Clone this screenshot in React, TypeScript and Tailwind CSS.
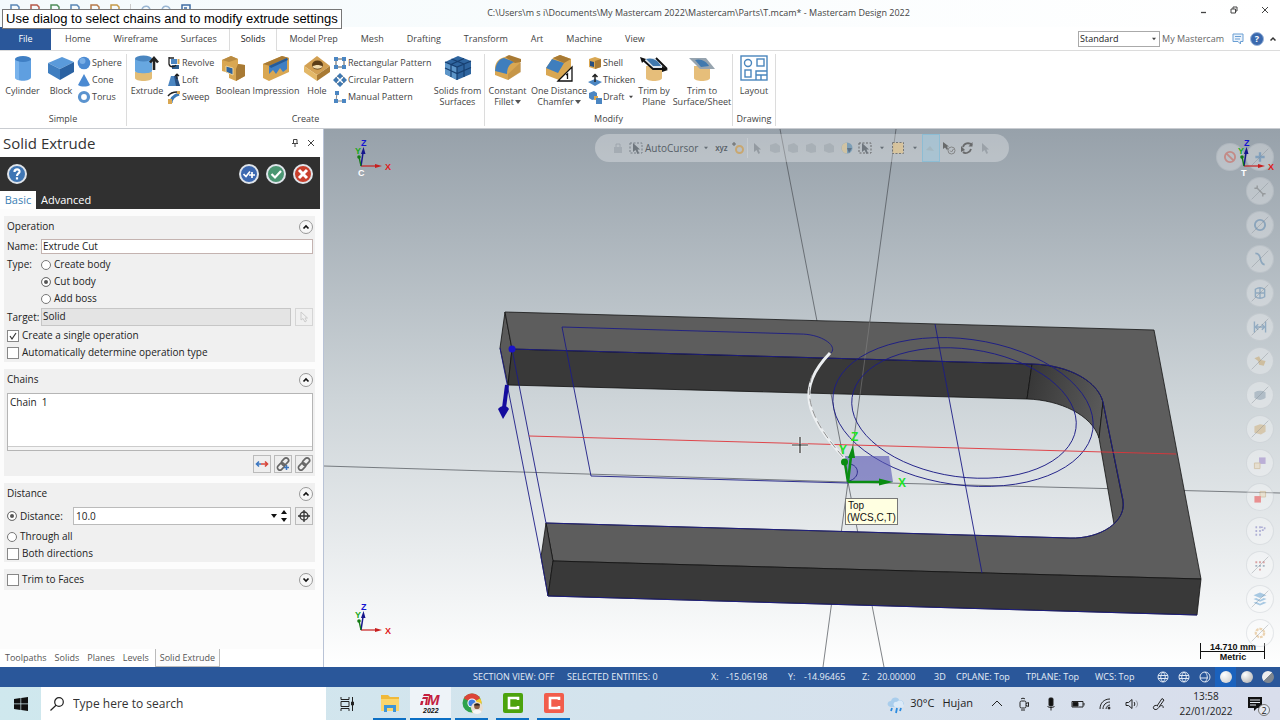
import { useState, type ReactNode } from 'react';

const RIBBON_TABS = ['Home', 'Wireframe', 'Surfaces', 'Solids', 'Model Prep', 'Mesh', 'Drafting', 'Transform', 'Art', 'Machine', 'View'];
const PANEL_TABS = ['Toolpaths', 'Solids', 'Planes', 'Levels', 'Solid Extrude'];

const BLUE = '#4b86c2';
const DARK_BLUE = '#2f659f';
const GOLD = '#d9a752';
const DARK_GOLD = '#a87a34';

/* ---------- Icon helpers ---------- */

function Icon({ size = 'w-7 h-7', box = 28, children }: { size?: string; box?: number; children: ReactNode }) {
  return (
    <svg className={`${size} shrink-0`} viewBox={`0 0 ${box} ${box}`} fill="none" aria-hidden="true">
      {children}
    </svg>
  );
}

// Isometric block with three shaded faces
function Cube({ top, left, right }: { top: string; left: string; right: string }) {
  return (
    <>
      <path d="M1 9 L15 3 L27 8 L13 15Z" fill={top} />
      <path d="M1 9 L13 15 V26 L1 19Z" fill={left} />
      <path d="M13 15 L27 8 V18 L13 26Z" fill={right} />
    </>
  );
}

const bigIcons: Record<string, ReactNode> = {
  cylinder: (
    <>
      <path d="M6 5 V23 C6 28 22 28 22 23 V5Z" fill="#5f9fe0" />
      <path d="M6 5 V23 C6 25 8 26 10 26 V6Z" fill="#79b3ec" />
      <ellipse cx="14" cy="5" rx="8" ry="3" fill="#3f7fc4" />
    </>
  ),
  block: <Cube top="#5a9ada" left="#3f7ec0" right="#2b62a2" />,
  extrude: (
    <>
      <path d="M2 18 V24 C2 28 19 28 19 24 V18Z" fill="#e2bd77" />
      <path d="M2 5 V17 C2 20 19 20 19 17 V5Z" fill="#67a7e0" />
      <ellipse cx="10.500" cy="4.500" rx="8.500" ry="3" fill="#4a86c0" />
      <path d="M21 16 V6 M17 8.500 L21 4 L25 8.500" stroke="#222" strokeWidth="2.600" />
    </>
  ),
  boolean: (
    <>
      <path d="M3 6 L12 2 L19 5 V10 L26 11 V22 L17 27 L10 24 V19 L3 17Z" fill={GOLD} />
      <path d="M19 10 L26 11 V22 L17 27 V15Z" fill={DARK_GOLD} />
      <path d="M3 6 L12 2 L19 5 L10 8Z" fill="#b98b42" />
      <path d="M7 12 L14 14 V21 L7 18Z" fill={DARK_BLUE} stroke="#f0d49a" />
    </>
  ),
  impression: (
    <>
      <path d="M1 10 L20 2 L27 4 V18 L7 27 L1 24Z" fill={GOLD} />
      <path d="M1 10 L20 2 L27 4 L8 12Z" fill={DARK_GOLD} />
      <path d="M7 12 L25 4 V15 L21 18 L18 14 L14 20 L11 16 L7 20Z" fill="#3f7fc4" />
      <path d="M7 12 L25 4 L26 6 L9 14Z" fill="#265b98" />
    </>
  ),
  hole: (
    <>
      <path d="M1 12 L14 2 L27 12 L14 21Z" fill="#d2a053" />
      <path d="M1 12 V18 L14 27 V21Z" fill="#e3b868" />
      <path d="M27 12 V18 L14 27 V21Z" fill={DARK_GOLD} />
      <ellipse cx="14.500" cy="11" rx="5.500" ry="4.500" fill="#5b3d17" />
      <path d="M9.500 12.500 C11 15.500 18 15.500 19.500 12.500 C17 10.500 12 10.500 9.500 12.500Z" fill="#f1dcae" />
    </>
  ),
  surfaces: (
    <>
      <path d="M1 8 L14 2 L27 7 V20 L13 26 L1 20Z" fill="#2f659f" />
      <path d="M1 8 L13 13 L13 26 L1 20Z" fill="#5d96c9" />
      <path d="M1 8 L13 13 L27 7 M13 13 V26 M1 14 L13 19.500 L27 13.500 M7 10.500 V23 M20 10 V23 M7.500 5 L20 10 M20 4.500 L7 10.500" stroke="#173f70" strokeWidth="1.200" />
    </>
  ),
  fillet: (
    <>
      <path d="M1 13 C2 7 6 4 11 3 L26 6 V18 L14 26 L1 21Z" fill={GOLD} />
      <path d="M1 17 C2 9 5 5 10 4 L21 8 C16 9 13 13 13 20Z" fill="#3f7ebd" />
      <path d="M11 3 L15 1 L27 5 V8 L21 9Z" fill={DARK_GOLD} />
      <path d="M14 20 V26 L27 18 V8Z" fill="#b98a42" opacity=".6" />
    </>
  ),
  chamfer: (
    <>
      <path d="M1 14 L8 4 L15 1 L26 5 V18 L14 26 L1 21Z" fill={GOLD} />
      <path d="M1 14 L7 5 L19 9 L13 19Z" fill="#3f7ebd" />
      <path d="M8 4 L15 1 L26 5 L19 9Z" fill={DARK_GOLD} />
      <path d="M13 27 L27 13 V27Z" fill="#fff" stroke="#111" strokeWidth="1.300" />
      <path d="M21 21 L22.500 20 V25" stroke="#111" strokeWidth="1.300" />
    </>
  ),
  trimPlane: (
    <>
      <path d="M6 12 V24 C6 28 22 28 22 24 V12Z" fill="#e6be7a" />
      <path d="M1 5 L16 4 L27 15 L13 15Z" fill="#dfe7ef" />
      <path d="M6 5 C12 3 18 6 21 12 L13 12Z" fill="#4179ae" />
      <path d="M2 5 L13 15 L26 15 M16 4 L27 15" stroke="#111" strokeWidth="1.800" />
      <path d="M0 3 L6 5 L2 9Z M28 16 L22 18 V12Z" fill="#111" />
    </>
  ),
  trimSheet: (
    <>
      <path d="M6 12 V24 C6 28 22 28 22 24 V12Z" fill="#e6be7a" />
      <path d="M1 4 L18 4 L27 15 L12 15Z" fill="#97a4af" />
      <path d="M7 6 C13 4 19 8 21 12 L13 13Z" fill="#4179ae" />
    </>
  ),
  layout: (
    <g stroke="#4a86bd" strokeWidth="1.400">
      <rect x="1" y="2" width="26" height="24" />
      <circle cx="8" cy="9" r="3.500" />
      <rect x="17" y="5" width="7" height="7" />
      <rect x="5" y="16" width="6" height="7" />
      <path d="M27 17 H16 V26 M16 21 H27 M21 21 V26" />
    </g>
  ),
};

const smallIcons: Record<string, ReactNode> = {
  sphere: (
    <>
      <circle cx="7" cy="7" r="6.300" fill="#4b8ad2" />
      <circle cx="5.500" cy="5" r="3" fill="#79aee6" />
    </>
  ),
  cone: <path d="M7 1 L13 12 C10 14 4 14 1 12Z" fill="#4b8ad2" />,
  torus: <circle cx="7" cy="7" r="4.500" stroke="#5a93cf" strokeWidth="3.200" />,
  revolve: (
    <>
      <path d="M4 3 H10 V8 H4Z" fill={BLUE} />
      <path d="M5 9 H12 V13 H5Z" fill="#2f5f8e" />
      <path d="M2 1 V8 C3 12 8 11 9 9 M2 2 H7" stroke="#222" strokeWidth="1.300" />
      <path d="M11.500 3 V8" stroke={GOLD} strokeWidth="2" />
    </>
  ),
  loft: (
    <>
      <path d="M1 13 L4 3 H9 L13 13Z" fill={BLUE} />
      <path d="M7 3 L9 13 H13 L10 3Z" fill="#284f80" />
      <path d="M10 1 V6 M8 3 L10 1 L12 3" stroke="#222" strokeWidth="1.200" />
    </>
  ),
  sweep: (
    <>
      <path d="M4 13 C4 9 6 6 12 4" stroke="#3b78b5" strokeWidth="3" />
      <path d="M1 6 C4 2 7 2 10 2" stroke="#222" strokeWidth="1.500" />
      <path d="M1 9 H5 V14 H1Z M10 1 H13 V4 H10Z" fill={GOLD} />
    </>
  ),
  rectPattern: (
    <>
      <path d="M3 3 H11 V11 H3Z" stroke="#555" strokeWidth="1" />
      <path d="M1 1 H5 V5 H1Z M9 1 H13 V5 H9Z M1 9 H5 V13 H1Z M9 9 H13 V13 H9Z" fill={BLUE} />
    </>
  ),
  circPattern: (
    <>
      <circle cx="7" cy="7" r="4.500" stroke="#777" />
      <path d="M7 0 L10 3 L7 6 L4 3Z M7 8 L10 11 L7 14 L4 11Z M0 7 L3 4 L6 7 L3 10Z M8 7 L11 4 L14 7 L11 10Z" fill="#3f78b0" />
    </>
  ),
  manPattern: (
    <>
      <path d="M4 3 L3 11 H11" stroke="#888" />
      <path d="M2 1 H6 V5 H2Z M1 9 H5 V13 H1Z M9 9 H13 V13 H9Z" fill={BLUE} />
    </>
  ),
  shell: (
    <>
      <path d="M1 3 L7 1 L13 3 V11 L7 13 L1 11Z" fill={GOLD} />
      <path d="M7 5 L13 3 V11 L7 13Z" fill={DARK_GOLD} />
      <path d="M2 5 L6 6 V11 L2 10Z" fill="#284f80" />
    </>
  ),
  thicken: (
    <>
      <path d="M0 9 L7 6 L14 9 L7 13Z" fill={BLUE} />
      <path d="M7 9 V2 M4.500 4 L7 1.500 L9.500 4" stroke="#222" strokeWidth="1.500" />
    </>
  ),
  draft: (
    <>
      <path d="M1 3 L6 1 L9 3 V9 L4 10 L1 8Z" fill={BLUE} />
      <path d="M6 6 H10 V10 H6Z" fill={GOLD} />
      <path d="M8 8 H14 V14 H8Z" fill={BLUE} />
    </>
  ),
};

/* ---------- Ribbon ---------- */

function BigButton({ icon, width, lines, caret }: { icon: string; width: string; lines: string[]; caret?: boolean }) {
  return (
    <button type="button" className={`flex flex-col items-center ${width}`}>
      <Icon>{bigIcons[icon]}</Icon>
      <span className="mt-[3px] leading-[11px] whitespace-nowrap">
        {lines.map((line, i) => (
          <span key={line} className="flex items-center justify-center">
            {line}
            {caret && i === lines.length - 1 && (
              <svg className="w-1.5 h-1.5 ml-px" viewBox="0 0 6 6">
                <path d="M0 1 H6 L3 5Z" fill="#555" />
              </svg>
            )}
          </span>
        ))}
      </span>
    </button>
  );
}

function SmallButtons({ items, width, caretOn }: { items: [string, string][]; width: string; caretOn?: string }) {
  return (
    <div className={`flex flex-col ${width}`}>
      {items.map(([icon, label]) => (
        <button key={label} type="button" className="flex items-center gap-px h-[17px] whitespace-nowrap">
          <Icon size="w-3.5 h-3.5" box={14}>{smallIcons[icon]}</Icon>
          {label}
          {caretOn === label && (
            <svg className="w-1 h-1 ml-1" viewBox="0 0 6 6">
              <path d="M0 1 H6 L3 5Z" fill="#444" />
            </svg>
          )}
        </button>
      ))}
    </div>
  );
}

function RibbonGroup({ label, children }: { label: string; children: ReactNode }) {
  return (
    <section className="flex flex-col border-r border-[#dcdcdc] mb-0.5">
      <div className="flex items-start flex-1">{children}</div>
      <h2 className="text-center leading-[14px]">{label}</h2>
    </section>
  );
}

const quickAccess = ['#5a86b4', '#b55a4a', '#4f8d5a', '#5a86b4', '#b57a4a', '#c49a4a'];

function Header() {
  const [tab, setTab] = useState('Solids');
  return (
    <header className="bg-white text-[#444]">
      <div className="flex h-[27px] bg-gradient-to-r from-[#f4fafc] to-white">
        <div className="flex items-start gap-2.5 w-[210px] pl-2.5 pt-1" aria-hidden="true">
          {quickAccess.map((c, i) => (
            <svg key={i} className="w-2.5 h-3" viewBox="0 0 10 12" fill="none">
              <path d="M1 11 V1 H7 L9 3 V11Z" stroke={c} strokeWidth="1.500" />
            </svg>
          ))}
          <span className="w-px h-4 bg-[#ccc]" />
          <svg className="w-2.5 h-3" viewBox="0 0 10 12" fill="none">
            <path d="M1 5 C3 1 9 1 9 7" stroke="#9bb7d3" strokeWidth="1.500" />
          </svg>
          <svg className="w-2.5 h-3" viewBox="0 0 10 12" fill="none">
            <path d="M9 5 C7 1 1 1 1 7" stroke="#9bb7d3" strokeWidth="1.500" />
          </svg>
          <svg className="w-2.5 h-3" viewBox="0 0 10 12" fill="none">
            <path d="M1 1 H9 V11 H1Z" stroke="#3f6da4" strokeWidth="1.500" />
            <path d="M3 4 H6" stroke="#3f6da4" strokeWidth="1.500" />
          </svg>
        </div>
        <h1 className="flex-1 text-center text-[9px] leading-[26px]">
          C:\Users\m s i\Documents\My Mastercam 2022\Mastercam\Parts\T.mcam* - Mastercam Design 2022
        </h1>
        <div className="flex items-start">
          <button type="button" aria-label="Minimize" className="w-8 h-5 grid place-items-center">
            <svg className="w-2 h-2" viewBox="0 0 8 8"><path d="M2 6.500 H7" stroke="#444" strokeWidth="1.300" /></svg>
          </button>
          <button type="button" aria-label="Restore" className="w-[30px] h-5 grid place-items-center">
            <svg className="w-2 h-2" viewBox="0 0 8 8" fill="none"><path d="M1 3 H5.500 V7 H1Z M3 3 V1 H7 V5 H5.500" stroke="#444" /></svg>
          </button>
          <button type="button" aria-label="Close" className="w-[31px] h-5 grid place-items-center">
            <svg className="w-2 h-2" viewBox="0 0 8 8"><path d="M1 1 L7 7 M7 1 L1 7" stroke="#444" /></svg>
          </button>
        </div>
      </div>

      <nav className="flex gap-px h-6 text-[9px] border-b border-[#dcdcdc]">
        <button type="button" className="w-[51px] mr-0.5 bg-[#2a579a] text-white">File</button>
        {RIBBON_TABS.map(name => (
          <button
            key={name}
            type="button"
            onClick={() => setTab(name)}
            className={`px-[11px] whitespace-nowrap ${tab === name ? 'bg-white text-[#222] border-x border-[#dcdcdc] h-6' : ''}`}
          >
            {name}
          </button>
        ))}
        <div className="ml-auto flex items-center pr-1">
          <div className="relative mr-0.5">
            <select aria-label="Toolbar state" className="appearance-none block w-[82px] h-4 border border-[#aaa] bg-white text-[#222] px-px text-[9px] leading-[14px]">
              <option>Standard</option>
            </select>
            <svg className="absolute right-1 top-1.5 w-1 h-1 pointer-events-none" viewBox="0 0 6 6"><path d="M0 1 H6 L3 5Z" fill="#444" /></svg>
          </div>
          <a href="#mastercam" className="text-[#666]">My Mastercam</a>
          <button type="button" aria-label="Messages" className="ml-2">
            <Icon size="w-3 h-3" box={12}>
              <path d="M1 1 H11 V8.500 H8.500 V11 L6 8.500 H1Z" fill="#eaf2fb" stroke="#6a9fd4" />
              <path d="M3 3.500 H9 M3 6 H8" stroke="#6a9fd4" />
            </Icon>
          </button>
          <button type="button" aria-label="Help" className="ml-1.5">
            <span className="grid place-items-center w-3.5 h-3.5 rounded-full bg-[#3a69ae] border border-[#9db6da] text-white text-[9px] font-bold leading-none">?</span>
          </button>
          <button type="button" aria-label="Collapse ribbon" className="ml-1.5">
            <svg className="w-1.5 h-1.5" viewBox="0 0 6 6" fill="none"><path d="M0.500 4.500 L3 2 L5.500 4.500" stroke="#333" strokeWidth="1.500" /></svg>
          </button>
        </div>
      </nav>

      <div className="flex h-[78px] pt-[3px] text-[9px] border-b border-[#c9ccd1]">
        <RibbonGroup label="Simple">
          <BigButton icon="cylinder" width="w-[45px]" lines={['Cylinder']} />
          <BigButton icon="block" width="w-8" lines={['Block']} />
          <SmallButtons width="w-[49px]" items={[['sphere', 'Sphere'], ['cone', 'Cone'], ['torus', 'Torus']]} />
        </RibbonGroup>
        <RibbonGroup label="Create">
          <BigButton icon="extrude" width="w-10" lines={['Extrude']} />
          <SmallButtons width="w-[48px]" items={[['revolve', 'Revolve'], ['loft', 'Loft'], ['sweep', 'Sweep']]} />
          <BigButton icon="boolean" width="w-9" lines={['Boolean']} />
          <BigButton icon="impression" width="w-[50px]" lines={['Impression']} />
          <BigButton icon="hole" width="w-8" lines={['Hole']} />
          <SmallButtons width="w-[98px]" items={[['rectPattern', 'Rectangular Pattern'], ['circPattern', 'Circular Pattern'], ['manPattern', 'Manual Pattern']]} />
          <BigButton icon="surfaces" width="w-[53px]" lines={['Solids from', 'Surfaces']} />
        </RibbonGroup>
        <RibbonGroup label="Modify">
          <BigButton icon="fillet" width="w-[45px]" lines={['Constant', 'Fillet']} caret />
          <BigButton icon="chamfer" width="w-[58px]" lines={['One Distance', 'Chamfer']} caret />
          <SmallButtons width="w-[48px]" caretOn="Draft" items={[['shell', 'Shell'], ['thicken', 'Thicken'], ['draft', 'Draft']]} />
          <BigButton icon="trimPlane" width="w-9" lines={['Trim by', 'Plane']} />
          <BigButton icon="trimSheet" width="w-[60px]" lines={['Trim to', 'Surface/Sheet']} />
        </RibbonGroup>
        <RibbonGroup label="Drawing">
          <BigButton icon="layout" width="w-[42px]" lines={['Layout']} />
        </RibbonGroup>
      </div>
    </header>
  );
}

/* ---------- Solid Extrude panel ---------- */

function GroupHeader({ title, open = true }: { title: ReactNode; open?: boolean }) {
  return (
    <div className="flex items-center justify-between h-[21px]">
      {title}
      <button type="button" aria-label="Toggle section" className="grid place-items-center w-3.5 h-3.5 rounded-full border border-[#999] bg-[#f7f7f7]">
        <svg className={`w-2 h-2 ${open ? '' : 'rotate-180'}`} viewBox="0 0 8 8" fill="none">
          <path d="M1.500 5.500 L4 3 L6.500 5.500" stroke="#111" strokeWidth="1.700" />
        </svg>
      </button>
    </div>
  );
}

function Radio({ name, label, checked }: { name: string; label: string; checked?: boolean }) {
  return (
    <label className="flex items-center gap-[3px] h-[17px]">
      <input
        type="radio"
        name={name}
        defaultChecked={checked}
        className="appearance-none w-2.5 h-2.5 rounded-full border border-[#777] bg-white checked:bg-[#555] checked:shadow-[inset_0_0_0_2px_#fff]"
      />
      {label}
    </label>
  );
}

function Check({ label, checked }: { label: string; checked?: boolean }) {
  return (
    <label className="flex items-center gap-[3px] h-[17px]">
      <span className="grid">
        <input type="checkbox" defaultChecked={checked} className="peer appearance-none w-3 h-3 border border-[#888] bg-white [grid-area:1/1]" />
        <svg className="w-3 h-3 hidden peer-checked:block pointer-events-none [grid-area:1/1]" viewBox="0 0 12 12" fill="none">
          <path d="M3 6 L5 9 L9 3" stroke="#333" strokeWidth="1.200" />
        </svg>
      </span>
      {label}
    </label>
  );
}

function RoundButton({ label, color, children }: { label: string; color: string; children: ReactNode }) {
  return (
    <button type="button" aria-label={label} className={`grid place-items-center w-5 h-5 rounded-full border-2 border-[#dfe4ea] ${color}`}>
      <svg className="w-3 h-3" viewBox="0 0 12 12" fill="none" stroke="#fff" strokeWidth="2.200">{children}</svg>
    </button>
  );
}

function SquareButton({ label, children }: { label: string; children: ReactNode }) {
  return (
    <button type="button" aria-label={label} className="grid place-items-center w-[18px] h-[18px] shrink-0 border border-[#bbb] bg-[#eee]">
      <svg className="w-3.5 h-3.5" viewBox="0 0 14 14" fill="none">{children}</svg>
    </button>
  );
}

const chainLink = (
  <g stroke="#666" strokeWidth="1.700">
    <rect x="6.500" y="0.500" width="5" height="8" rx="2.500" transform="rotate(45 9 4.500)" />
    <rect x="2.500" y="5.500" width="5" height="8" rx="2.500" transform="rotate(45 5 9.500)" />
  </g>
);

function ExtrudePanel() {
  return (
    <aside className="flex flex-col w-[324px] shrink-0 bg-[#fcfcfc] border-r border-[#b9c3d6] text-[10px] text-[#222]">
      <div className="flex items-center h-7 pl-[3px] pr-2 bg-white">
        <h2 className="text-[15px] leading-none text-[#333]">Solid Extrude</h2>
        <button type="button" aria-label="Pin" className="ml-auto mr-2">
          <svg className="w-2 h-2" viewBox="0 0 8 8" fill="none"><path d="M2.500 0.500 H6 V4.500 M2.500 0.500 V4.500 M1 4.500 H7 M4 4.500 V8" stroke="#444" /></svg>
        </button>
        <button type="button" aria-label="Close panel">
          <svg className="w-2 h-2" viewBox="0 0 8 8"><path d="M1 1 L7 7 M7 1 L1 7" stroke="#444" /></svg>
        </button>
      </div>

      <div className="mr-[3px] bg-[#303030]">
        <div className="flex items-center gap-[7px] h-[34px] px-[7px]">
          <RoundButton label="Help" color="bg-[#3f76b4]">
            <path d="M3.500 4 C3.500 0.500 9 0.500 8.500 4 C8 5.500 6 5.500 6 8 M6 9.300 V11.500" />
          </RoundButton>
          <span className="flex-1" />
          <RoundButton label="OK and create new" color="bg-[#3c68b0]">
            <path d="M0.500 6 L3 8.500 L7 3.500 M9 4 V10 M6 7 H12" strokeWidth="1.700" />
          </RoundButton>
          <RoundButton label="OK" color="bg-[#4b9672]"><path d="M1.500 6 L5 9.500 L11 3" /></RoundButton>
          <RoundButton label="Cancel" color="bg-[#c93f2c]"><path d="M2 2 L10 10 M10 2 L2 10" strokeWidth="3" /></RoundButton>
        </div>
        <div className="flex text-[11px] leading-[18px]">
          <button type="button" className="w-9 bg-white text-[#3a80b5]">Basic</button>
          <button type="button" className="px-[5px] text-white">Advanced</button>
        </div>
      </div>

      <div className="flex flex-col gap-[7px] pt-[7px] pl-1 pr-2 flex-1">
        <fieldset className="bg-[#f0f0f0] pl-[3px] pr-0.5 pb-px">
          <GroupHeader title="Operation" />
          <div className="flex items-center h-[19px]">
            <label htmlFor="op-name" className="w-[34px]">Name:</label>
            <input id="op-name" defaultValue="Extrude Cut" className="flex-1 min-w-0 h-[15px] px-px bg-white border border-[#c4b3b0]" />
          </div>
          <div className="flex">
            <span className="w-[34px] leading-[17px]">Type:</span>
            <div>
              <Radio name="type" label="Create body" />
              <Radio name="type" label="Cut body" checked />
              <Radio name="type" label="Add boss" />
            </div>
          </div>
          <div className="flex items-center h-5">
            <label htmlFor="target" className="w-[34px]">Target:</label>
            <input id="target" disabled defaultValue="Solid" className="flex-1 min-w-0 h-[18px] px-px pb-0.5 mr-1 bg-[#e4e4e4] border border-[#c6c6c6]" />
            <button type="button" aria-label="Select target" className="grid place-items-center w-[18px] h-[18px] border border-[#d5d5d5]">
              <svg className="w-3 h-3" viewBox="0 0 12 12" fill="none"><path d="M3 1 V9 L5 7.500 L7 11 L8.500 10 L7 7 H9.500Z" stroke="#ccc" /></svg>
            </button>
          </div>
          <Check label="Create a single operation" checked />
          <Check label="Automatically determine operation type" />
        </fieldset>

        <fieldset className="bg-[#f0f0f0] pl-[3px] pr-0.5 pb-[3px]">
          <GroupHeader title={<label htmlFor="chains">Chains</label>} />
          <div className="mt-[3px] border border-[#b5b5b5] bg-white">
            <textarea id="chains" readOnly defaultValue="Chain  1" className="block w-full h-[52px] px-0.5 pt-px resize-none outline-none leading-[14px]" />
            <div className="h-1 border-t border-[#ccc] bg-[#f5f5f5]" />
          </div>
          <div className="flex justify-end gap-[3px] mt-1">
            <SquareButton label="Reverse all">
              <path d="M1 7 H6 M4 4.500 L1.500 7 L4 9.500" stroke="#3b76c0" strokeWidth="1.600" />
              <path d="M6 7 H13 M10 4.500 L12.500 7 L10 9.500" stroke="#d8453a" strokeWidth="1.600" />
            </SquareButton>
            <SquareButton label="Add chains">
              {chainLink}
              <path d="M10.500 8 V13 M8 10.500 H13" stroke="#3b76c0" strokeWidth="1.500" />
            </SquareButton>
            <SquareButton label="Reselect all">{chainLink}</SquareButton>
          </div>
        </fieldset>

        <fieldset className="bg-[#f0f0f0] pl-[3px] pr-0.5">
          <GroupHeader title="Distance" />
          <div className="flex items-center h-6">
            <div className="w-[66px]"><Radio name="distance" label="Distance:" checked /></div>
            <div className="flex items-center flex-1 h-[18px] mr-1 pr-[3px] bg-white border border-[#bbb]">
              <input aria-label="Distance value" defaultValue="10.0" className="flex-1 min-w-0 px-0.5 outline-none" />
              <svg className="w-1.5 h-1.5 mr-1" viewBox="0 0 6 6"><path d="M0 1 H6 L3 5Z" fill="#111" /></svg>
              <svg className="w-1.5 h-3" viewBox="0 0 6 12"><path d="M0 4 H6 L3 0Z M0 8 H6 L3 12Z" fill="#111" /></svg>
            </div>
            <SquareButton label="Pick distance">
              <circle cx="7" cy="7" r="4" stroke="#333" strokeWidth="1.300" />
              <path d="M7 1 V13 M1 7 H13" stroke="#333" strokeWidth="1.300" />
            </SquareButton>
          </div>
          <Radio name="distance" label="Through all" />
          <Check label="Both directions" />
        </fieldset>

        <fieldset className="bg-[#f0f0f0] pl-[3px] pr-0.5">
          <GroupHeader title={<Check label="Trim to Faces" />} open={false} />
        </fieldset>
      </div>

      <nav className="flex h-[18px] pl-px bg-white text-[9px] text-[#555]">
        {PANEL_TABS.map(name => (
          <button
            key={name}
            type="button"
            className={`px-1 whitespace-nowrap ${name === 'Solid Extrude' ? 'ml-0.5 border border-t-0 border-[#bbb] bg-[#fcfcfc]' : ''}`}
          >
            {name}
          </button>
        ))}
      </nav>
    </aside>
  );
}

/* ---------- Graphics window ---------- */

// Small view axis marker; the origin is its lower left corner
function Gnomon({ x, y, label }: { x: number; y: number; label?: string }) {
  return (
    <g transform={`translate(${x} ${y})`} className="text-[9px] font-bold font-['Liberation_Sans',sans-serif]">
      <path d="M0 0 H16" stroke="#c81e1e" strokeWidth="1.200" />
      <path d="M21 0 L14 -2 V2Z" fill="#c81e1e" />
      <path d="M0 0 L2 -13" stroke="#16168c" strokeWidth="1.500" />
      <path d="M2.500 -19 L0 -12 H4.500Z" fill="#16168c" />
      <path d="M0 0 L-2 -9" stroke="#137a13" strokeWidth="1.300" />
      <circle cx="-2" cy="-9" r="1.800" fill="#137a13" />
      <text x="24" y="4" fill="#e01b1b">X</text>
      <text x="0" y="-20" fill="#1414d2">Z</text>
      <text x="-6" y="-12" fill="#18a818">Y</text>
      {label && <text x="-3" y="10" fill="#fff">{label}</text>}
    </g>
  );
}

function Scene() {
  return (
    <svg className="absolute inset-0 w-full h-full" viewBox="324 129 956 538" preserveAspectRatio="xMidYMid slice" fill="none">
      <defs>
        <linearGradient id="wall" x1="1030" y1="380" x2="1105" y2="400" gradientUnits="userSpaceOnUse">
          <stop offset="0" stopColor="#383838" />
          <stop offset="1" stopColor="#5a5a5a" />
        </linearGradient>
      </defs>

      {/* construction axes behind the part */}
      <g stroke="#4a4f55" strokeWidth=".7">
        <path d="M324 466 L848 482 L1280 493" />
        <path d="M780 129 L848 482 L884 667" />
        <path d="M896 129 L848 482 L823 667" />
      </g>

      {/* part */}
      <path d="M505 312 L512 349 L508 385 L500 348Z" fill="#5a5a5a" stroke="#111" strokeWidth=".8" />
      <path d="M512 349 L1032 364 L1027 399 L508 385Z" fill="#393939" stroke="#111" strokeWidth=".8" />
      <path d="M1032 364 C1070 365 1098 382 1103 402 L1099 438 C1092 415 1060 400 1027 399Z" fill="url(#wall)" stroke="#111" strokeWidth=".8" />
      <path d="M1103 402 L1123 502 C1124 512 1120 519 1114 524 L1099 438Z" fill="#585858" stroke="#111" strokeWidth=".8" />
      <path
        d="M505 312 L1154 330 L1201 579 L553 561 L546 523 L1070 538 C1100 539 1127 522 1123 500 L1103 402 C1098 382 1070 365 1032 364 L512 349Z"
        fill="#5d5d5d"
        stroke="#151515"
        strokeWidth=".8"
      />
      <path d="M546 523 L553 561 L548 596 L541 557Z" fill="#4f4f4f" stroke="#111" strokeWidth=".8" />
      <path d="M553 561 L1201 579 L1197 615 L548 596Z" fill="#393939" stroke="#111" strokeWidth=".8" />
      <path d="M870 320 L860 395" stroke="#8a8a8a" strokeWidth=".5" />

      {/* wireframe */}
      <g stroke="#1c1c86" strokeWidth=".9">
        <path d="M512 349 L1032 364 C1070 365 1098 382 1103 402 L1123 500 C1127 522 1100 539 1070 538 L546 523Z" />
        <path d="M500 348 L541 557 L548 596 L1197 615" />
        <path d="M831 353 C838 346 822 334 800 334 L562 327 L591 476 L848 483" />
        <ellipse cx="963" cy="412" rx="131" ry="73" transform="rotate(7.800 963 412)" />
        <ellipse cx="964" cy="413" rx="113" ry="64" transform="rotate(7.900 964 413)" />
        <path d="M935 324 L982 573" />
      </g>
      <path d="M529 436 L1176 454" stroke="#e0343a" strokeWidth=".9" />

      {/* chained curve */}
      <path d="M830 353 C796 388 804 415 846 460" stroke="#eceff1" strokeWidth="3" />
      <path d="M812 375 C804 400 814 424 844 458" stroke="#777" strokeWidth=".8" strokeDasharray="8 4" />

      {/* extrude direction */}
      <circle cx="512" cy="349" r="3.500" fill="#1a12c8" />
      <path d="M507 385 L504 408" stroke="#140c9e" strokeWidth="4" />
      <path d="M498 409 C501 405 507 405 509 409 L503 419Z" fill="#140c9e" />

      {/* work plane */}
      <path d="M845 456 L889 456 L893 482 L848 482Z" fill="#5a58b4" fillOpacity=".62" />
      <path d="M849 481 C860 478 860 466 850 464" stroke="#2c2c8c" />
      <path d="M848 482 H882" stroke="#0a8c12" strokeWidth="2.500" />
      <path d="M893 482 L879 478.500 V485.500Z" fill="#0a8c12" />
      <path d="M848 482 L851 456" stroke="#0a8c12" strokeWidth="2.500" />
      <path d="M853 445 L848 458 L855 458Z" fill="#0a8c12" />
      <path d="M848 482 L845 463" stroke="#0a8c12" strokeWidth="2.500" />
      <circle cx="844.500" cy="462" r="3.500" fill="#0a8c12" />
      <g fill="#1fe226" className="text-[12px] font-bold font-['Liberation_Sans',sans-serif]">
        <text x="898" y="487">X</text>
        <text x="851" y="441">Z</text>
        <text x="839" y="454">Y</text>
      </g>

      {/* cursor */}
      <path d="M800 437 V453 M792 445 H808" stroke="#fff" strokeWidth="2.500" />
      <path d="M800 437 V453 M792 445 H808" stroke="#222" strokeWidth="1.200" />

      <rect x="845.500" y="498.500" width="52" height="26" fill="#ffffe1" stroke="#777" />
      <g fill="#111" className="text-[10px] font-['Liberation_Sans',sans-serif]">
        <text x="848" y="509">Top</text>
        <text x="847" y="521">(WCS,C,T)</text>
      </g>

      <Gnomon x={361} y={166} label="C" />
      <Gnomon x={361} y={630} />

      {/* scale bar */}
      <path d="M1200.500 643 V659 M1264.500 643 V659 M1200 651.500 H1265" stroke="#111" />
      <g fill="#111" textAnchor="middle" className="text-[9px] font-bold font-['Liberation_Sans',sans-serif]">
        <text x="1233" y="650">14.710 mm</text>
        <text x="1233" y="660">Metric</text>
      </g>
    </svg>
  );
}

const cursorShape = <path d="M4 2 V11 L6.500 9 L8.500 13 L10 12 L8.500 8.500 H11Z" fill="#5d656d" />;
const solidShape = <path d="M2 4 L8 2 L12 5 V11 L7 12 L2 10Z" fill="#8d969e" opacity=".45" />;

function ToolIcon({ label, width = 'w-[18px]', children }: { label: string; width?: string; children: ReactNode }) {
  return (
    <button type="button" aria-label={label} className={`grid place-items-center h-full ${width}`}>
      <svg className="w-3.5 h-3.5 opacity-80" viewBox="0 0 14 14" fill="none">{children}</svg>
    </button>
  );
}

function Caret({ label }: { label: string }) {
  return (
    <button type="button" aria-label={label} className="grid place-items-center w-[15px] h-full">
      <svg className="w-1 h-1" viewBox="0 0 6 6"><path d="M0 1 H6 L3 5Z" fill="#666e76" /></svg>
    </button>
  );
}

function SelectionBar() {
  return (
    <div className="absolute top-[5px] left-1/2 -translate-x-1/2 flex items-center h-7 w-[414px] pl-3.5 rounded-full bg-white/30 text-[10px] text-[#565e66]">
      <ToolIcon label="Lock"><path d="M3 6 H11 V12 H3Z" fill="#8f98a0" opacity=".6" /><path d="M5 6 V3 H9 V6" stroke="#8f98a0" opacity=".7" /></ToolIcon>
      <ToolIcon label="AutoCursor mode"><path d="M1 2 H13 V12 H1Z" stroke="#6a727a" strokeDasharray="2 1.500" />{cursorShape}</ToolIcon>
      <span className="leading-7">AutoCursor</span>
      <Caret label="AutoCursor options" />
      <button type="button" aria-label="Fast point" className="w-4 text-[8px] font-semibold leading-none">xyz</button>
      <ToolIcon label="AutoCursor settings"><circle cx="8.500" cy="8.500" r="3.500" stroke="#cda25b" strokeWidth="2" /><path d="M3 1 V5 M1 3 H5" stroke="#555" /></ToolIcon>
      <span className="w-px h-5 bg-white/20" />
      <ToolIcon label="Select"><g opacity=".5">{cursorShape}</g></ToolIcon>
      <ToolIcon label="Select body">{solidShape}</ToolIcon>
      <ToolIcon label="Select face">{solidShape}</ToolIcon>
      <ToolIcon label="Select edge">{solidShape}</ToolIcon>
      <ToolIcon label="Select feature">{solidShape}</ToolIcon>
      <ToolIcon label="Select color"><circle cx="7" cy="7" r="5.500" fill="#6f98b4" /><path d="M1.500 7 A5.500 5.500 0 0 1 7 1.500 V12.500 A5.500 5.500 0 0 1 1.500 7Z" fill="#d6c49c" /><path d="M7 7 H12 L9 12Z" fill="#48617a" /></ToolIcon>
      <ToolIcon label="Selection settings"><path d="M1 2 H13 V12 H1Z" stroke="#555" strokeDasharray="2 1.500" />{cursorShape}</ToolIcon>
      <Caret label="Selection options" />
      <ToolIcon label="Window selection"><path d="M1.500 1.500 H12.500 V12.500 H1.500Z" fill="#dfc594" stroke="#666" strokeDasharray="2 1.500" /></ToolIcon>
      <Caret label="Window options" />
      <div className="h-full bg-[#9fc4d8]/60 border border-[#8dbdd4]">
        <ToolIcon label="Verify selection" width="w-4"><path d="M2 9 L6 5 L10 10Z" fill="#a3b5be" /></ToolIcon>
      </div>
      <ToolIcon label="Invert selection">
        <path d="M1 1 V8 L3 6.500 L5 9 L6 8 L5 5.500 H7Z" fill="#555" />
        <circle cx="9.500" cy="9.500" r="3.500" stroke="#777" />
        <path d="M8 9.500 L9.500 11 L11.500 8" stroke="#777" />
      </ToolIcon>
      <ToolIcon label="Select last">
        <path d="M3 6 C4 2 9 1 12 4 M11 8 C10 12 5 13 3 11" stroke="#555" strokeWidth="1.800" />
        <path d="M12.500 1 V5.500 H8.500Z M1 5 L5 9 L1 11Z" fill="#555" />
      </ToolIcon>
      <ToolIcon label="Clear selection"><g opacity=".4">{cursorShape}</g></ToolIcon>
    </div>
  );
}

const quickMasks: { label: string; slash: boolean; art: ReactNode }[] = [
  { label: 'Points', slash: true, art: <path d="M8 3 V13 M3 8 H13" stroke="#3d78b0" strokeWidth="2.500" /> },
  { label: 'Lines', slash: true, art: <path d="M4 4 L12 12 M2 5 H5 V2 M11 14 V11 H14" stroke="#666" strokeWidth="1.500" /> },
  { label: 'Arcs', slash: true, art: <circle cx="8" cy="8" r="5.500" stroke="#4878a4" strokeWidth="2" /> },
  { label: 'Splines', slash: true, art: <path d="M3 2 C11 2 6 13 13 14" stroke="#4878a4" strokeWidth="1.800" /> },
  { label: 'Wireframe', slash: true, art: <path d="M3 4 C6 2 10 2 13 4 V12 C10 14 6 14 3 12Z M3 8 H13 M8 3 V13" stroke="#4878a4" strokeWidth="1.500" /> },
  { label: 'Drafting', slash: true, art: <path d="M2 2 V14 M14 2 V14 M2 8 H14 M6 5 L3 8 L6 11 M10 5 L13 8 L10 11" stroke="#4878a4" strokeWidth="1.500" /> },
  { label: 'Surfaces', slash: true, art: <path d="M2 5 L7 3 L9 7 L14 8 L12 13 L7 12 L6 8Z" fill="#c49a52" /> },
  { label: 'Meshes', slash: true, art: <path d="M2 5 C6 3 10 3 14 5 V11 C10 14 6 14 2 11Z" fill="#7d93a3" /> },
  { label: 'Bodies', slash: true, art: <path d="M2 5 L8 3 L14 4 V11 L9 14 L2 12Z" fill="#c9a567" /> },
  { label: 'Group color', slash: false, art: <><path d="M7 2 H14 V9 H7Z" fill="#8a6cc0" /><path d="M2 8 H8 V14 H2Z" fill="#e9d4ae" stroke="#bd9a62" /></> },
  { label: 'Result color', slash: false, art: <><path d="M8 2 H14 V8 H8Z" fill="#e9d4ae" stroke="#bd9a62" /><path d="M2 7 H9 V14 H2Z" fill="#ea2020" /></> },
  { label: 'Groups', slash: false, art: <path d="M4 3 V14 M8 3 V14 M9 4 H13 V7 H9" stroke="#6464b4" strokeWidth="1.800" strokeDasharray="2 2" /> },
  { label: 'Colors', slash: true, art: <><path d="M3 5 H13" stroke="#b44" strokeWidth="2" strokeDasharray="2 2" /><path d="M3 9 H13" stroke="#468" strokeWidth="2" strokeDasharray="2 2" /><path d="M7 13 H9" stroke="#b44" strokeWidth="2" /></> },
  { label: 'Levels', slash: true, art: <path d="M8 1 L15 4 L8 7 L1 4Z M1 8 L4 7 L8 9 L12 7 L15 8 L8 11Z M1 12 L4 11 L8 13 L12 11 L15 12 L8 15Z" fill="#4a90c8" /> },
  { label: 'Mask settings', slash: true, art: <circle cx="8" cy="8" r="4.500" stroke="#d9a45a" strokeWidth="2.500" strokeDasharray="3 1" /> },
];

function MaskButton({ label, slash, art }: { label: string; slash: boolean; art: ReactNode }) {
  return (
    <button type="button" aria-label={label} className="w-7 h-7 rounded-full bg-white/30 border border-[#8e989f]/20">
      <svg className="w-full h-full" viewBox="-6 -6 28 28" fill="none">
        <g opacity=".45">{art}</g>
        {slash && <path d="M-1 17 L17 -1" stroke="#7d868e" strokeWidth=".8" opacity=".5" />}
      </svg>
    </button>
  );
}

function GraphicsWindow() {
  return (
    <main className="relative flex-1 min-w-0 overflow-hidden bg-gradient-to-b from-[#97a1aa] via-[#cdd4d8] to-white">
      <Scene />
      <SelectionBar />
      <div className="absolute top-3.5 right-1.5 flex items-start gap-0.5">
        <MaskButton label="Only mode" slash={false} art={<><circle cx="8" cy="8" r="5.500" stroke="#d04a3a" strokeWidth="2" /><path d="M4 4 L12 12" stroke="#d04a3a" strokeWidth="2" /></>} />
        <div className="flex flex-col gap-1.5">
          {quickMasks.map(m => <MaskButton key={m.label} {...m} />)}
        </div>
      </div>
      <svg className="absolute top-0 right-0 w-[50px] h-[54px] pointer-events-none" viewBox="1230 129 50 54" fill="none">
        <Gnomon x={1244} y={166} label="T" />
      </svg>
    </main>
  );
}

/* ---------- Status bar ---------- */

function StatusBar() {
  return (
    <footer className="flex items-center justify-end h-5 bg-[#2a579a] text-[9px] text-[#e4ecf6] whitespace-nowrap">
      <span className="w-[94px]">SECTION VIEW: OFF</span>
      <span className="w-36">SELECTED ENTITIES: 0</span>
      <span className="w-[15px]">X:</span>
      <span className="w-[62px]">-15.06198</span>
      <span className="w-4">Y:</span>
      <span className="w-[58px]">-14.96465</span>
      <span className="w-[15px]">Z:</span>
      <span className="w-[57px]">20.00000</span>
      <button type="button" className="w-[22px] text-left">3D</button>
      <button type="button" className="w-[70px] text-left">CPLANE: Top</button>
      <button type="button" className="w-[69px] text-left">TPLANE: Top</button>
      <button type="button" className="w-[57px] text-left">WCS: Top</button>
      <div className="flex w-32">
        {['Wireframe', 'Dimmed hidden lines', 'No hidden lines'].map(mode => (
          <button key={mode} type="button" aria-label={mode} className="grid place-items-center w-[21px] h-5">
            <svg className="w-3 h-3" viewBox="0 0 12 12" fill="none" stroke="#dfe8f3">
              <circle cx="6" cy="6" r="5" />
              <path d={mode === 'No hidden lines' ? 'M6 1 C9 4 9 8 6 11 M1 7 H9' : 'M6 1 C3 4 3 8 6 11 M6 1 C9 4 9 8 6 11 M1 4.500 H11 M1 7.500 H11'} />
            </svg>
          </button>
        ))}
        <button type="button" aria-label="Outline shaded" className="grid place-items-center w-[21px] h-5 bg-[#1b62bd]">
          <span className="w-3 h-3 rounded-full bg-[radial-gradient(circle_at_35%_30%,#fff,#c9c9c9)]" />
        </button>
        <button type="button" aria-label="Shaded" className="grid place-items-center w-[21px] h-5">
          <span className="w-3 h-3 rounded-full bg-[radial-gradient(circle_at_35%_30%,#fff,#a9a9a9)]" />
        </button>
        <button type="button" aria-label="Translucency" className="grid place-items-center w-[21px] h-5">
          <span className="w-3 h-3 rounded-full bg-[linear-gradient(135deg,#eee_50%,#7f8790_50%)]" />
        </button>
      </div>
    </footer>
  );
}

/* ---------- Windows taskbar ---------- */

function TaskApp({ label, active, children }: { label: string; active?: boolean; children: ReactNode }) {
  return (
    <button type="button" aria-label={label} className={`flex flex-col items-center justify-between h-full w-[41px] ${active ? 'bg-[#eef3f8]' : ''}`}>
      <svg className="w-6 h-6 mt-1" viewBox="0 0 24 24" fill="none">{children}</svg>
      <span className={`h-0.5 bg-[#0c6fc4] ${active ? 'w-full' : 'w-[33px]'}`} />
    </button>
  );
}

function TrayIcon({ label, children }: { label: string; children: ReactNode }) {
  return (
    <button type="button" aria-label={label} className="grid place-items-center w-[27px] h-full">
      <svg className="w-3.5 h-3.5" viewBox="0 0 14 14" fill="none" stroke="#222">{children}</svg>
    </button>
  );
}

function Taskbar() {
  return (
    <nav className="flex items-center h-[33px] bg-gradient-to-r from-[#cfe8ee] to-[#d9deec] text-[#222]">
      <button type="button" aria-label="Start" className="grid place-items-center w-[41px] h-full">
        <svg className="w-3.5 h-3.5" viewBox="0 0 14 14" fill="#111"><path d="M0 2 L6.500 1 V6.600 H0Z M7.200 0.900 L14 0 V6.600 H7.200Z M0 7.300 H6.500 V13 L0 12Z M7.200 7.300 H14 V14 L7.200 13Z" /></svg>
      </button>
      <label className="flex items-center h-full w-[285px] pl-[9px] bg-white">
        <svg className="w-3.5 h-3.5" viewBox="0 0 14 14" fill="none" stroke="#222" strokeWidth="1.200"><circle cx="9" cy="5" r="4.300" /><path d="M6 8.200 L0.500 13.500" /></svg>
        <input aria-label="Search" placeholder="Type here to search" className="flex-1 min-w-0 pl-[9px] text-[12px] outline-none placeholder:text-[#333]" />
      </label>
      <button type="button" aria-label="Task view" className="grid place-items-center w-[41px] h-full mr-0.5">
        <svg className="w-3.5 h-3.5" viewBox="0 0 14 14" fill="none" stroke="#222"><path d="M1 0 V2.500 H9 V0 M1 4.500 H9 V9.500 H1Z M1 14 V11.500 H9 V14 M12.500 0 V14" /><path d="M11.500 5 H13.500 V8 H11.500Z" fill="#222" /></svg>
      </button>
      <TaskApp label="File Explorer">
        <path d="M3 4 H10 L12 6 H21 V20 H3Z" fill="#f0b93a" />
        <path d="M3 8 H21 V20 H3Z" fill="#fbd66d" />
        <path d="M6 21 V14 H18 V21 H15 V17 H9 V21Z" fill="#3e96d8" />
      </TaskApp>
      <TaskApp label="Mastercam 2022" active>
        <g fill="#c41e3e">
          <text x="8" y="14" className="text-[15px] font-bold italic font-['Liberation_Sans',sans-serif]">M</text>
          <path d="M5 3 H11 L10.500 5 H4Z M4 6 H9 L8 14 H6 L7 8 H3Z M2 10 H4.500 L3.500 14 H1Z" />
        </g>
        <text x="4" y="22" fill="#111" className="text-[7px] font-bold italic font-['Liberation_Sans',sans-serif]">2022</text>
      </TaskApp>
      <TaskApp label="Google Chrome">
        <circle cx="12" cy="12" r="9.500" fill="#2fa24c" />
        <path d="M12 12 L3.800 7.200 A9.500 9.500 0 0 1 20.200 7.200Z" fill="#dc4437" />
        <path d="M12 12 L20.200 7.200 A9.500 9.500 0 0 1 12 21.500Z" fill="#f7c928" />
        <circle cx="12" cy="12" r="4.600" fill="#fff" />
        <circle cx="12" cy="12" r="3.600" fill="#3f7de0" />
        <circle cx="17" cy="17" r="6" fill="#e8ddd2" />
        <circle cx="17" cy="15.500" r="2.800" fill="#8a5d43" />
        <path d="M12.500 21 C13 17.500 21 17.500 21.500 21 C19 23.500 15 23.500 12.500 21Z" fill="#f7f7f7" />
        <path d="M14 14.500 C14 11.500 20 11.500 20 14.500Z" fill="#2a211c" />
      </TaskApp>
      <TaskApp label="Camtasia">
        <rect x="2" y="2" width="20" height="20" rx="2" fill="#4ca30d" />
        <path d="M17 9 V7 H8 V17 H17 V15" stroke="#fff" strokeWidth="2.600" />
      </TaskApp>
      <TaskApp label="Camtasia Recorder">
        <rect x="2" y="2" width="20" height="20" rx="2" fill="#f25d4c" />
        <path d="M17 9 V7 H8 V17 H17 V15" stroke="#fff" strokeWidth="2.600" />
      </TaskApp>

      <div className="flex items-center h-full ml-auto">
        <button type="button" className="flex items-center h-full text-[11px] whitespace-nowrap mr-2.5">
          <svg className="w-5 h-5 mr-1" viewBox="0 0 20 20">
            <path d="M5 13 C0 12 1 7 5 7 C6 2 13 3 13 6 C19 6 19 12 15 13Z" fill="#a9cdec" />
            <path d="M9 13 C6 11 8 7 11 8 C13 5 18 7 17 10 C19 12 17 14 15 13Z" fill="#dbeaf8" />
            <path d="M6 14 L5 17 M11 14 L10 19 M15 14 L14 17" stroke="#2b8be0" strokeWidth="1.800" />
          </svg>
          <span className="mr-2">30°C</span>
          <span>Hujan</span>
        </button>
        <TrayIcon label="Show hidden icons"><path d="M2 9 L7 4 L12 9" /></TrayIcon>
        <TrayIcon label="Meet now"><rect x="3" y="4" width="6" height="7" rx="1.500" /><path d="M9 6.500 L11.500 5.500 V9.500 L9 8.500 M4 2 C5 1 7 1 8 2 M4 13 H8" /></TrayIcon>
        <TrayIcon label="Microphone"><rect x="5" y="1" width="4" height="8" rx="1" fill="#111" /><path d="M3.500 9 C4 11 10 11 10.500 9 M7 10.500 V13.500" /></TrayIcon>
        <TrayIcon label="Battery"><path d="M1 4.500 H12 V10 H1Z M13 6 V8.500" /><path d="M2 5.500 H7 V9 H2Z" fill="#111" /></TrayIcon>
        <TrayIcon label="Wi-Fi"><path d="M2 12 C2 6 6 2 12 2 M5 12 C5 8 8 5 12 5 M8 12 C8 10 10 8 12 8" /><circle cx="11" cy="11" r="1" fill="#222" /></TrayIcon>
        <TrayIcon label="Volume"><path d="M1 5.500 H3.500 L7 2.500 V11.500 L3.500 8.500 H1Z M9 5 C10 6 10 8 9 9" /><path d="M11 3.500 C13 6 13 8 11 10.500" opacity=".4" /></TrayIcon>
        <TrayIcon label="Pen"><path d="M5 9 L10 1.500 L12 3 L7 10 M6 9 C3 7 0 10 2 12 C5 14 7 10 8 9 C10 8 12 9 11 11" /></TrayIcon>
        <button type="button" className="w-[68px] text-[10px] leading-[15px]">
          <span className="block">13:58</span>
          <span className="block">22/01/2022</span>
        </button>
        <button type="button" aria-label="2 notifications" className="relative grid place-items-center w-[30px] h-full mr-2.5">
          <svg className="w-3.5 h-3.5" viewBox="0 0 14 14"><path d="M0 0 H14 V11 H9 L6 14 V11 H0Z" fill="#111" /><path d="M2 3 H12 M2 5.500 H12 M2 8 H8" stroke="#e8edf4" /></svg>
          <span className="absolute right-0 bottom-1 grid place-items-center w-3 h-3 rounded-full border border-[#777] bg-[#e6eaf2] text-[9px] leading-none">2</span>
        </button>
      </div>
    </nav>
  );
}

export default function App() {
  return (
    <div className="relative flex flex-col min-h-screen bg-white font-['Open_Sans','Noto_Sans',sans-serif]">
      <Header />
      <div className="flex flex-1">
        <ExtrudePanel />
        <GraphicsWindow />
      </div>
      <StatusBar />
      <Taskbar />
      <div role="tooltip" className="absolute left-0.5 top-[9px] px-[3px] border border-[#777] bg-white text-black text-[13px] leading-[18px] whitespace-nowrap font-['Liberation_Sans',sans-serif]">
        Use dialog to select chains and to modify extrude settings
      </div>
    </div>
  );
}
